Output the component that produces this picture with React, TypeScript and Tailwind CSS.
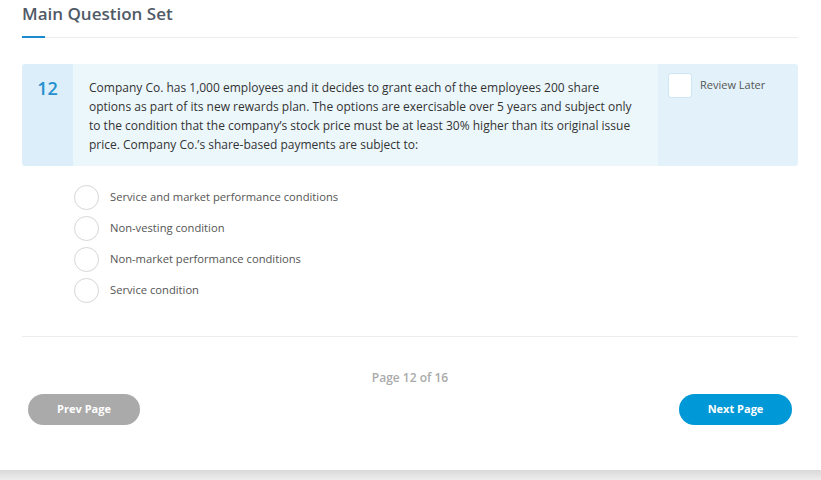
import { useState } from 'react'

const options = [
  'Service and market performance conditions',
  'Non-vesting condition',
  'Non-market performance conditions',
  'Service condition',
]

function Radio({ label, checked, onClick }: { label: string; checked: boolean; onClick: () => void }) {
  return (
    <label onClick={onClick} className="flex h-[31px] cursor-pointer items-center">
      <span className="flex h-[25px] w-[25px] items-center justify-center rounded-full border border-[#d6d6d6] bg-white">
        {checked && <span className="h-[11px] w-[11px] rounded-full bg-[#0097d6]" />}
      </span>
      <span className="ml-[11px] text-[11.2px] text-[#555]">{label}</span>
    </label>
  )
}

export default function App() {
  const [selected, setSelected] = useState<number | null>(null)
  const [review, setReview] = useState(false)

  return (
    <div className="flex h-[480px] w-[821px] flex-col bg-white font-['Open_Sans',sans-serif]">
      <div className="flex-1 px-[22px]">
        <h1 className="pt-[3px] text-[17px] leading-[22px] font-semibold text-[#505a66]">Main Question Set</h1>
        <div className="mt-[12px] flex h-px w-[776px] bg-[#ececec]">
          <div className="-mt-px h-[2px] w-[23px] bg-[#1b8ad0]" />
        </div>

        <div className="mt-[26px] flex h-[102px] w-[776px] overflow-hidden rounded-[3px]">
          <div className="w-[51px] bg-[#dbeef9] pt-[13px] text-center text-[18px] leading-[22px] font-semibold text-[#2490cf]">
            12
          </div>
          <div className="flex-1 bg-[#ecf7fc] pt-[14px] pr-[20px] pl-[16px] text-[12px] leading-[19px] text-[#333]">
            Company Co. has 1,000 employees and it decides to grant each of the employees 200 share options as part of
            its new rewards plan. The options are exercisable over 5 years and subject only to the condition that the
            company’s stock price must be at least 30% higher than its original issue price. Company Co.’s share-based
            payments are subject to:
          </div>
          <div className="flex w-[140px] items-start bg-[#e3f2fa] pt-[9px] pl-[10px]">
            <button
              onClick={() => setReview(!review)}
              className="flex h-[25px] w-[24px] items-center justify-center rounded-[3px] border border-[#cfe6f3] bg-white text-[#0097d6]"
            >
              {review && '✓'}
            </button>
            <span className="ml-[8px] pt-[5px] text-[11px] leading-[14px] text-[#555]">Review Later</span>
          </div>
        </div>

        <div className="mt-[16px] flex flex-col pl-[52px]">
          {options.map((o, i) => (
            <Radio key={o} label={o} checked={selected === i} onClick={() => setSelected(i)} />
          ))}
        </div>

        <div className="mt-[30px] h-px w-[776px] bg-[#ececec]" />

        <div className="mt-[33px] w-[776px] text-center text-[12px] leading-[16px] font-semibold text-[#aaa]">
          Page 12 of 16
        </div>

        <div className="mt-[8px] flex w-[776px] justify-between pr-[6px] pl-[6px]">
          <button className="h-[31px] w-[112px] rounded-full bg-[#aaaaaa] text-[11px] font-bold text-white">
            Prev Page
          </button>
          <button className="h-[31px] w-[113px] rounded-full bg-[#0098d6] text-[11px] font-bold text-white">
            Next Page
          </button>
        </div>
      </div>
      <div className="h-[10px] bg-gradient-to-b from-[#d9d9d9] to-[#ededed]" />
    </div>
  )
}
